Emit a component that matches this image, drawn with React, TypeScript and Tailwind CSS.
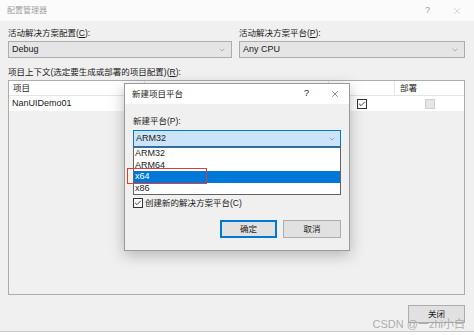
import { ChevronDown, Check, X } from "lucide-react";

const font = { fontFamily: '"Liberation Sans", "Noto Sans CJK SC", sans-serif' };

const Combo = ({ text }: { text: string }) => (
  <div className="h-[17px] flex items-center justify-between pl-[3px] pr-[5px] border border-[#adadad] bg-[#e5e5e5] text-[#1a1a1a]">
    <span className="leading-none text-[9px]">{text}</span>
    <ChevronDown size={8} strokeWidth={1.3} className="text-[#666]" />
  </div>
);

export default function App() {
  return (
    <div style={font} className="relative w-[474px] h-[335px] overflow-hidden bg-white text-[8.5px] text-[#1a1a1a]">
      <div className="h-[332px] flex flex-col bg-[#f0f0f0] border-b border-[#c8c8c8]">
        {/* title bar */}
        <div className="h-[21px] bg-[#fbfbfb] flex items-center justify-between pl-[7px] pr-[12px] shrink-0">
          <span className="text-[8px] text-[#a0a0a0]">配置管理器</span>
          <div className="flex items-center gap-[22px] text-[#a0a0a0]">
            <span className="text-[9px]">?</span>
            <X size={10} strokeWidth={1} />
          </div>
        </div>

        <div className="flex-1 flex flex-col pl-[8px] pr-[9px]">
          <div className="grid grid-cols-[224px_1fr] gap-[7px] mt-[5px]">
            <div className="flex flex-col">
              <span className="h-[15px] leading-[15px]">活动解决方案配置(<u>C</u>):</span>
              <Combo text="Debug" />
            </div>
            <div className="flex flex-col">
              <span className="h-[15px] leading-[15px]">活动解决方案平台(<u>P</u>):</span>
              <Combo text="Any CPU" />
            </div>
          </div>

          <span className="mt-[6px] h-[16px] leading-[16px]">项目上下文(选定要生成或部署的项目配置)(<u>R</u>):</span>

          {/* project table */}
          <div className="h-[215px] border border-[#adadad] bg-[#f0f0f0] flex flex-col">
            <div className="h-[15px] bg-white grid grid-cols-[136px_184px_66px_1fr] border-b border-[#e5e5e5]">
              <span className="pl-[4px] leading-[14px] border-r border-[#e5e5e5]">项目</span>
              <span className="border-r border-[#e5e5e5]" />
              <span className="border-r border-[#e5e5e5]" />
              <span className="pl-[5px] leading-[14px]">部署</span>
            </div>
            <div className="h-[16px] bg-white grid grid-cols-[136px_184px_66px_1fr] border-b border-[#f0f0f0]">
              <span className="pl-[3px] leading-[15px] text-[9px]">NanUIDemo01</span>
              <span />
              <span className="flex items-center justify-center">
                <span className="w-[10px] h-[10px] border border-[#333] bg-white flex items-center justify-center">
                  <Check size={8} strokeWidth={2.5} />
                </span>
              </span>
              <span className="flex items-center justify-center">
                <span className="w-[10px] h-[10px] border border-[#d0d0d0] bg-[#e6e6e6]" />
              </span>
            </div>
          </div>

          <div className="flex justify-end mt-[10px]">
            <div className="w-[57px] h-[18px] border border-[#adadad] bg-[#e1e1e1] flex items-center justify-center">
              关闭
            </div>
          </div>
        </div>
      </div>

      {/* modal dialog */}
      <div className="absolute left-[124px] top-[83px] w-[226px] h-[168px] bg-[#f0f0f0] border border-[#9a9a9a] shadow-[0_4px_14px_rgba(0,0,0,0.25)] flex flex-col">
        <div className="h-[20px] bg-white flex items-center justify-between pl-[7px] pr-[9px] shrink-0">
          <span>新建项目平台</span>
          <div className="flex items-center gap-[21px]">
            <span className="text-[9px]">?</span>
            <X size={10} strokeWidth={1.2} />
          </div>
        </div>
        <div className="flex flex-col px-[8px] pt-[9px]">
          <span className="h-[17px] leading-[17px]">新建平台(P):</span>
          <div className="relative">
            <div className="h-[17px] flex items-center justify-between pl-[2px] pr-[4px] border border-[#0078d7] bg-[#cce4f7]">
              <span className="leading-none text-[9px]">ARM32</span>
              <ChevronDown size={8} strokeWidth={1.3} className="text-[#555]" />
            </div>
            <div className="absolute left-0 right-0 top-[17px] bg-white border border-[#646464] flex flex-col text-[9px] leading-[11.5px] z-10">
              <span className="pl-[1px] h-[11.5px]">ARM32</span>
              <span className="pl-[1px] h-[11.5px]">ARM64</span>
              <span className="pl-[1px] h-[11.5px] bg-[#0078d7] text-white">x64</span>
              <span className="pl-[1px] h-[11.5px]">x86</span>
            </div>
          </div>
          <div className="flex items-center gap-[2px] mt-[50px] h-[12px]">
            <span className="w-[10px] h-[10px] border border-[#333] bg-white flex items-center justify-center">
              <Check size={8} strokeWidth={2.5} />
            </span>
            <span>创建新的解决方案平台(C)</span>
          </div>
          <div className="flex justify-end gap-[6px] mt-[11px]">
            <div className="w-[57px] h-[18px] border-2 border-[#0078d7] bg-[#e1e1e1] flex items-center justify-center">确定</div>
            <div className="w-[58px] h-[18px] border border-[#adadad] bg-[#e1e1e1] flex items-center justify-center">取消</div>
          </div>
        </div>
      </div>

      {/* annotation box */}
      <div className="absolute left-[127px] top-[168px] w-[80px] h-[16px] border-[1.5px] border-[#e23b3b] z-20" />

      {/* watermark */}
      <span className="absolute right-[9px] bottom-[5px] text-[11px] leading-none text-[#9a9a9a]/80">
        CSDN @一zhi小白
      </span>
    </div>
  );
}
